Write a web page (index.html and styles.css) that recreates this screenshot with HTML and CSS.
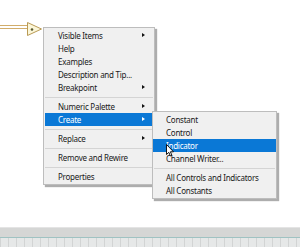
FILE: index.html
```html
<!DOCTYPE html>
<html>
<head>
<meta charset="utf-8">
<link rel="stylesheet" href="styles.css">
</head>
<body>
<div class="window">
  <div class="canvas">
    <svg class="node" width="44" height="18" viewBox="0 0 44 18">
      <line x1="0" y1="4.5" x2="28" y2="4.5" stroke="#d2ad6a" stroke-width="1"/>
      <line x1="0" y1="7.5" x2="28" y2="7.5" stroke="#d2ad6a" stroke-width="1"/>
      <polygon points="27.5,1.5 41.5,8 27.5,14.5" fill="#fbf6d8" stroke="#b99a55" stroke-width="1"/>
      <circle cx="32" cy="8.5" r="1.3" fill="#5a5a30"/>
    </svg>

    <div class="menu main-menu">
      <div class="item">Visible Items<span class="arrow"></span></div>
      <div class="item">Help</div>
      <div class="item">Examples</div>
      <div class="item">Description and Tip...</div>
      <div class="item">Breakpoint<span class="arrow"></span></div>
      <div class="sep"></div>
      <div class="item">Numeric Palette<span class="arrow"></span></div>
      <div class="item active">Create<span class="arrow"></span></div>
      <div class="sep"></div>
      <div class="item">Replace<span class="arrow"></span></div>
      <div class="sep"></div>
      <div class="item">Remove and Rewire</div>
      <div class="sep"></div>
      <div class="item">Properties</div>
    </div>

    <div class="menu sub-menu">
      <div class="item">Constant</div>
      <div class="item">Control</div>
      <div class="item active">Indicator</div>
      <div class="item">Channel Writer...</div>
      <div class="sep"></div>
      <div class="item">All Controls and Indicators</div>
      <div class="item">All Constants</div>
    </div>

    <svg class="cursor" width="9" height="13" viewBox="0 0 9 13">
      <path d="M0.5 0.5 L0.5 10.5 L2.8 8.3 L4.4 12 L5.9 11.3 L4.4 7.8 L7.5 7.8 Z" fill="#ffffff" stroke="#000000" stroke-width="0.9" stroke-linejoin="round"/>
    </svg>
  </div>
  <div class="band"></div>
  <div class="teal"></div>
  <div class="ruler"></div>
</div>
</body>
</html>
```

FILE: styles.css
```css
html, body {
  margin: 0;
  padding: 0;
  background: #ffffff;
}
.window {
  width: 300px;
  height: 247px;
  display: flex;
  flex-direction: column;
  overflow: hidden;
  font-family: "Noto Sans", "Open Sans", sans-serif;
}
.canvas {
  position: relative;
  flex: 1;
  background: #ffffff;
}
.node {
  position: absolute;
  left: 0;
  top: 21px;
}
.menu {
  position: absolute;
  background: #f0f0f0;
  border: 1px solid #bdbdbd;
  box-shadow: 2px 2px 1px rgba(0,0,0,0.32);
  padding: 1px 0;
  box-sizing: border-box;
}
.main-menu {
  left: 43px;
  top: 27px;
  width: 112px;
}
.sub-menu {
  left: 152px;
  top: 111px;
  width: 125px;
}
.item {
  position: relative;
  height: 13px;
  line-height: 13px;
  font-size: 8px;
  letter-spacing: -0.25px;
  color: #1a1a1a;
  padding-left: 13px;
  white-space: nowrap;
}
.main-menu .item {
  margin: 0 1px;
}
.item.active {
  background: #0a78d6;
  color: #ffffff;
}
.arrow {
  position: absolute;
  right: 8px;
  top: 4px;
  width: 0;
  height: 0;
  border-top: 2.5px solid transparent;
  border-bottom: 2.5px solid transparent;
  border-left: 3px solid #111111;
}
.item.active .arrow {
  border-left-color: #ffffff;
}
.sep {
  height: 6px;
  display: flex;
  align-items: center;
  margin: 0 1px;
}
.sep::before {
  content: "";
  flex: 1;
  height: 1px;
  background: #d4d4d4;
}
.cursor {
  position: absolute;
  left: 166px;
  top: 144px;
}
.band {
  height: 9px;
  background: #d5d6d5;
  border-top: 1px solid #e4e4e4;
}
.teal {
  height: 1px;
  background: #9fc2c2;
}
.ruler {
  height: 9px;
  background-color: #e6e8e8;
  background-image: repeating-linear-gradient(90deg, #d2d4d4 0px, #d2d4d4 1px, transparent 1px, transparent 8px);
}
```
